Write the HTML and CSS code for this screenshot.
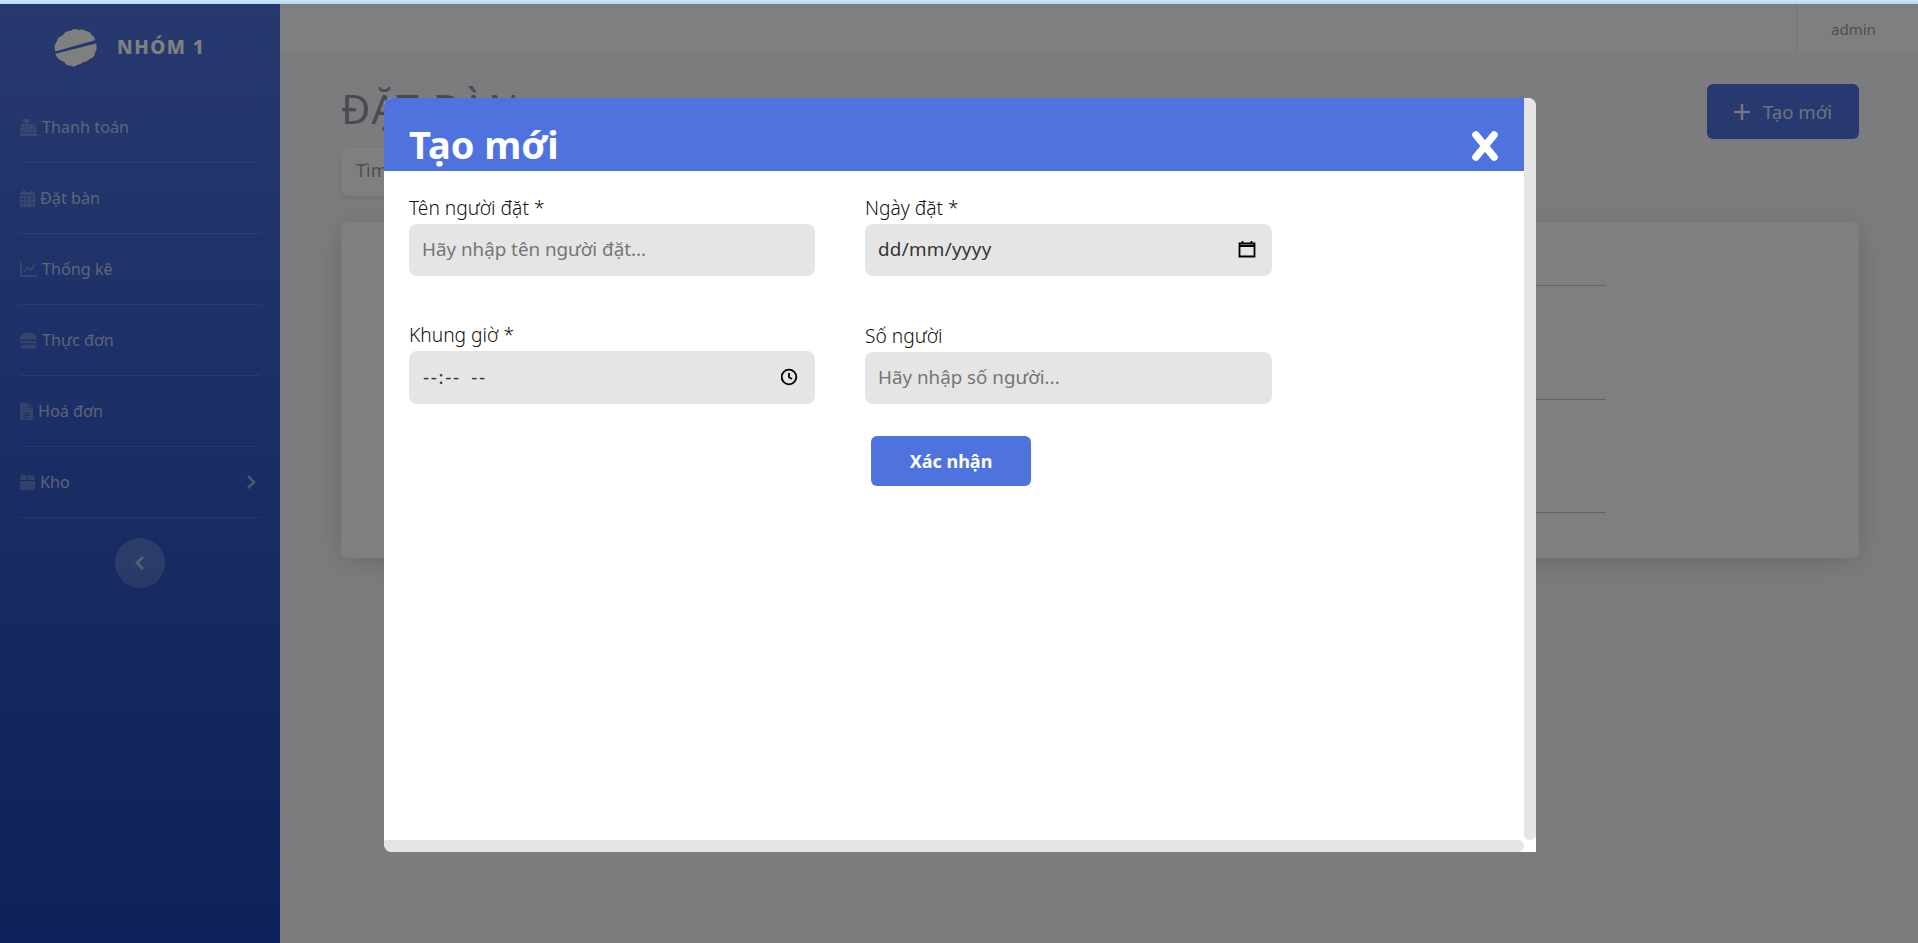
FILE: index.html
```html
<!DOCTYPE html>
<html lang="vi">
<head>
<meta charset="utf-8">
<title>Đặt bàn</title>
<link rel="stylesheet" href="styles.css">
</head>
<body>
<div class="strip"></div>
<div class="app">
  <aside class="sidebar">
    <div class="brand">
      <svg class="brand-logo" viewBox="0 0 42 38"><path d="M1 21c-1-3 0-6 2-8 0-3 3-5 6-6 1-3 4-4 7-4 2-2 5-3 8-1 2-1 5-1 7 1 3 0 5 2 6 4 2 1 3 3 3 5L1 23zM1.300 25L41 15c1 3 1 7-1 9 0 3-2 6-5 6-1 2-4 3-6 3-2 2-4 3-7 3-1 2-3 2-5 1-3 0-6-1-7-4-3-1-7-3-8.700-8z"/></svg>
      <span class="brand-name">NHÓM 1</span>
    </div>
    <nav class="nav">
      <a class="nav-item"><svg class="nav-icon i-reg" viewBox="0 0 17 17"><path d="M3 0h7v3H7v2h7.500l2.500 8H0L1.500 5H5V3H3zM0 14h17v3H0zM4 7v1h2V7zm4 0v1h2V7zm4 0v1h2V7zM4 10v1h2v-1zm4 0v1h2v-1zm4 0v1h2v-1z" fill-rule="evenodd"/></svg><span>Thanh toán</span></a>
      <a class="nav-item"><svg class="nav-icon i-cal" viewBox="0 0 15 17"><path d="M3 0h2v2h5V0h2v2h1.500A1.500 1.500 0 0 1 15 3.500V5H0V3.500A1.500 1.500 0 0 1 1.500 2H3zM0 6h15v9.500a1.500 1.500 0 0 1-1.500 1.500h-12A1.500 1.500 0 0 1 0 15.500zm2 2v2h2V8zm4.500 0v2h2V8zM11 8v2h2V8zM2 12v2h2v-2zm4.500 0v2h2v-2zm4.500 0v2h2v-2z" fill-rule="evenodd"/></svg><span>Đặt bàn</span></a>
      <a class="nav-item"><svg class="nav-icon i-reg" viewBox="0 0 17 15"><path d="M0 0h1.800v13H17v2H0z"/><path d="M3.500 10.500l4-5 3 2.500L15 2.500" fill="none" stroke-width="1.800" class="stroke"/></svg><span>Thống kê</span></a>
      <a class="nav-item"><svg class="nav-icon i-reg" viewBox="0 0 16 15"><path d="M0 6.500C0 2.500 4 0 8 0s8 2.500 8 6.500zM0 8h16v2.200H0zM.5 11.500h15V13a2 2 0 0 1-2 2h-11a2 2 0 0 1-2-2z"/></svg><span>Thực đơn</span></a>
      <a class="nav-item"><svg class="nav-icon i-file" viewBox="0 0 13 17"><path d="M1 0h7v4.500h5V16a1 1 0 0 1-1 1H1a1 1 0 0 1-1-1V1a1 1 0 0 1 1-1zm8 0l4 3.500H9zM3.500 10v1h6v-1zm0 2v1h6v-1zm0 2v1h6v-1z" fill-rule="evenodd"/></svg><span>Hoá đơn</span></a>
      <a class="nav-item"><svg class="nav-icon i-cal" viewBox="0 0 15 15"><path d="M2 0h5v5H0l.8-4A1.200 1.200 0 0 1 2 0zM8 0h5a1.200 1.200 0 0 1 1.200 1L15 5H8zM0 6h15v7.500a1.500 1.500 0 0 1-1.500 1.500h-12A1.500 1.500 0 0 1 0 13.500z"/></svg><span>Kho</span><svg class="nav-chevron" viewBox="0 0 10 16"><path d="M2 2l6 6-6 6"/></svg></a>
    </nav>
    <button class="collapse"><svg viewBox="0 0 10 16"><path d="M8 2L2 8l6 6"/></svg></button>
  </aside>
  <div class="main">
    <header class="topbar"><div class="user">admin</div></header>
    <section class="content">
      <div class="page-head">
        <h1>ĐẶT BÀN</h1>
        <button class="create"><svg viewBox="0 0 16 16"><path d="M8 0v16M0 8h16"/></svg><span>Tạo mới</span></button>
      </div>
      <div class="search">Tìm kiếm...</div>
      <div class="card">
        <div class="row r1"></div>
        <div class="row"></div>
        <div class="row"></div>
      </div>
    </section>
  </div>
  <div class="overlay"></div>
  <div class="modal-layer">
    <div class="modal">
      <div class="modal-main">
        <div class="modal-head">
          <h2>Tạo mới</h2>
          <svg class="close" viewBox="0 0 26 30"><path d="M4 4l18 22M22 4L4 26"/></svg>
        </div>
        <form class="form">
          <div class="grid">
            <label class="group"><span>Tên người đặt *</span><span class="field"><input type="text" placeholder="Hãy nhập tên người đặt..."></span></label>
            <label class="group"><span>Ngày đặt *</span><span class="field"><input class="date" type="text" value="dd/mm/yyyy"><svg class="picker" viewBox="0 0 18 18"><path d="M4.500 1v3M13.500 1v3M1.500 3.500h15v13h-15zM1.500 6h15" /></svg></span></label>
            <label class="group"><span>Khung giờ *</span><span class="field tall"><input class="time" type="text" value="--:-- --"><svg class="picker" viewBox="0 0 18 18"><circle cx="8" cy="9" r="7.300"/><path d="M8 5v4.300l3 1.700"/></svg></span></label>
            <label class="group"><span>Số người</span><span class="field"><input type="text" placeholder="Hãy nhập số người..."></span></label>
          </div>
          <button class="confirm" type="button">Xác nhận</button>
        </form>
      </div>
      <div class="scroll-y"></div>
      <div class="scroll-x"></div>
    </div>
  </div>
</div>
</body>
</html>
```
FILE: styles.css
```css
* { box-sizing: border-box; }
html, body { margin: 0; height: 100%; overflow: hidden; }
body {
  display: flex;
  flex-direction: column;
  font-family: "Noto Sans", "Open Sans", sans-serif;
  background: #f8f9fc;
}
.strip { height: 4px; flex: none; background: linear-gradient(#cfe6fb 0, #b0d6f7 100%); }
.app { position: relative; flex: 1; display: flex; min-height: 0; }

.sidebar {
  width: 280px;
  flex: none;
  background: linear-gradient(180deg, #4e72de 0%, #1a44b4 100%);
  padding: 0 20px;
  display: flex;
  flex-direction: column;
  color: #fff;
}
.brand { height: 86px; display: flex; align-items: center; padding-left: 34px; }
.brand-logo { width: 43px; height: 39px; fill: #fff; margin-right: 20px; }
.brand-name { font-size: 19px; font-weight: 800; letter-spacing: 1.500px; color: #fff; }
.nav { display: flex; flex-direction: column; margin-top: 2px; }
.nav-item {
  height: 71px;
  display: flex;
  align-items: center;
  gap: 5px;
  font-size: 16.200px;
  color: rgba(255,255,255,.66);
  border-bottom: 1px solid rgba(255,255,255,.15);
}
.nav-icon { fill: rgba(255,255,255,.25); stroke: none; flex: none; height: 17px; }
.nav-icon .stroke { stroke: rgba(255,255,255,.25); }
.i-reg { width: 17px; }
.i-cal { width: 15px; }
.i-file { width: 13px; }
.nav-chevron { width: 10px; height: 16px; margin-left: auto; margin-right: 4px; fill: none; stroke: rgba(255,255,255,.5); stroke-width: 2.500; }
.collapse {
  align-self: center;
  margin-top: 20px;
  width: 50px; height: 50px;
  border: 0; border-radius: 50%;
  background: rgba(255,255,255,.2);
  display: flex; align-items: center; justify-content: center;
  padding: 0;
}
.collapse svg { width: 10px; height: 16px; fill: none; stroke: rgba(255,255,255,.5); stroke-width: 3; }

.main { flex: 1; min-width: 0; display: flex; flex-direction: column; }
.topbar {
  height: 50px;
  flex: none;
  background: #fff;
  display: flex;
  justify-content: flex-end;
}
.user {
  width: 122px;
  border-left: 1px solid #e3e6f0;
  font-size: 15px;
  color: #9a9ca8;
  display: flex;
  align-items: center;
  padding-left: 34px;
}
.content { flex: 1; padding: 30px 59px 0 61px; }
.page-head { display: flex; justify-content: space-between; align-items: flex-start; height: 64px; }
.page-head h1 { margin: 0; font-size: 40px; line-height: 50px; font-weight: 400; letter-spacing: 2px; color: #9496a2; }
.create {
  width: 152px; height: 55px;
  border: 0; border-radius: 6px;
  background: #4e73df;
  color: rgba(255,255,255,.8);
  font: inherit; font-size: 18.600px;
  display: flex; align-items: center; justify-content: center;
  gap: 13px;
}
.create svg { width: 16px; height: 16px; fill: none; stroke: rgba(255,255,255,.85); stroke-width: 2.500; }
.search {
  width: 400px; height: 48px;
  background: #fff;
  border-radius: 6px;
  font-size: 18px;
  color: #9a9ca8;
  padding: 10px 15px;
  box-shadow: 0 2px 6px rgba(58,59,69,.15);
}
.card {
  margin-top: 26px;
  height: 336px;
  background: #fff;
  border-radius: 6px;
  box-shadow: 0 4px 28px rgba(58,59,69,.2);
  padding: 0 253px 0 100px;
}
.row { height: 113.500px; border-bottom: 1px solid #c9c9c9; }
.r1 { height: 64px; }

.overlay { position: absolute; inset: 0; background: rgba(0,0,0,.5); }
.modal-layer { position: absolute; inset: 0; padding: 94px 0 0 384px; }
.modal {
  width: 1152px; height: 754px;
  background: #fff;
  border-radius: 8px 8px 0 8px;
  overflow: hidden;
  display: grid;
  grid-template-columns: 1fr 12px;
  grid-template-rows: 1fr 12px;
}
.modal-main { min-width: 0; min-height: 0; overflow: hidden; }
.modal-head {
  height: 73px;
  background: #4e73df;
  padding: 22px 26px 0 25px;
  display: flex;
  justify-content: space-between;
  align-items: flex-start;
}
.modal-head h2 { margin: 0; font-size: 38px; line-height: 48px; font-weight: 700; color: #fff; }
.close { width: 26px; height: 30px; margin-top: 11px; fill: none; stroke: #fff; stroke-width: 7.500; stroke-linecap: round; }
.form { padding: 25px 0 0 25px; }
.grid {
  width: 863px;
  display: grid;
  grid-template-columns: 406px 407px;
  column-gap: 50px;
  row-gap: 47px;
  align-items: end;
}
.group { display: flex; flex-direction: column; font-size: 19.200px; font-weight: 300; line-height: 24px; color: #111; gap: 4px; }
.field {
  height: 52px;
  background: #e5e5e5;
  border-radius: 8px;
  display: flex;
  align-items: center;
  padding: 0 13px 2px;
}
.tall { height: 53px; }
.field input {
  flex: 1; min-width: 0;
  border: 0; outline: 0; background: transparent; padding: 0;
  font: inherit; font-size: 18.800px; font-weight: 400; color: #333;
}
.field input::placeholder { color: #757575; opacity: 1; }
.date { letter-spacing: .3px; }
.field .time { letter-spacing: 1.700px; word-spacing: 4px; padding-left: 1px; }
.picker { width: 18px; height: 18px; flex: none; margin-right: 3px; fill: none; stroke: #000; stroke-width: 1.800; }
.confirm {
  display: block;
  margin: 32px 0 0 462px;
  width: 160px; height: 50px;
  border: 0; border-radius: 6px;
  background: #4e73df;
  color: #fff;
  font: inherit; font-size: 18px; font-weight: 700;
}
.scroll-y { background: #e5e5e5; border-radius: 0 0 6px 6px; }
.scroll-x { background: #e5e5e5; border-radius: 0 6px 6px 0; }
```
